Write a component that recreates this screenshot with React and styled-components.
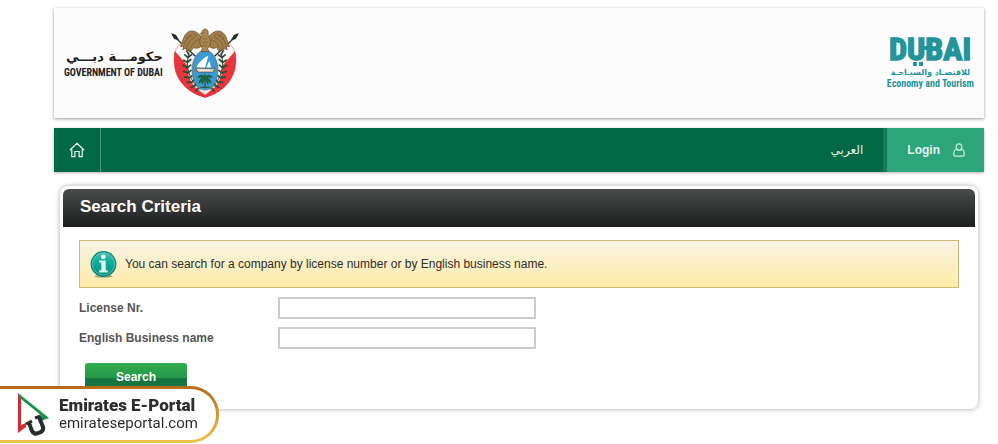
import React, { useState } from 'react'
import styled, { createGlobalStyle } from 'styled-components'

const GlobalStyle = createGlobalStyle`
  * {
    box-sizing: border-box;
  }

  body {
    margin: 0;
    background: #fff;
    font-family: 'Liberation Sans', Arial, sans-serif;
    font-size: 12px;
    color: #333;
  }
`

const narrow = "'Liberation Sans Narrow', 'Roboto Condensed', 'Liberation Sans', sans-serif"

const Page = styled.div`
  padding: 8px 14px 32px 54px;
`

const Header = styled.header`
  display: flex;
  justify-content: space-between;
  align-items: center;
  height: 110px;
  padding: 0 10px;
  margin-bottom: 10px;
  background: #fbfbfb;
  box-shadow: 0 1px 3px rgba(0, 0, 0, 0.4);
`

const GovLogo = styled.div`
  display: flex;
  align-items: center;
  gap: 8px;
`

const GovText = styled.div`
  display: flex;
  flex-direction: column;
  align-items: flex-end;
  color: #1d1d24;
  white-space: nowrap;
`

const GovArabic = styled.span`
  font: bold 13px/20px 'DejaVu Sans', sans-serif;
`

const GovEnglish = styled.span`
  font: bold 10px/12px ${narrow};
`

const DetLogo = styled.div`
  display: flex;
  flex-direction: column;
  align-items: center;
  padding-bottom: 6px;
  color: #24949a;
  white-space: nowrap;
`

const DetArabic = styled.span`
  font: bold 8px/10px 'DejaVu Sans', sans-serif;
`

const DetEnglish = styled.span`
  font: bold 10px/12px ${narrow};
`

const Nav = styled.nav`
  display: flex;
  height: 44px;
  margin-bottom: 14px;
  background: #006845;
  box-shadow: 0 1px 3px rgba(0, 0, 0, 0.3);
`

const NavLink = styled.a`
  display: flex;
  align-items: center;
  color: #e3f2ec;
  text-decoration: none;
`

const HomeLink = styled(NavLink)`
  justify-content: center;
  width: 47px;
  border-right: 1px solid #4d957d;
`

const LanguageLink = styled(NavLink)`
  margin-left: auto;
  padding: 0 20px;
  font: 12px/20px 'DejaVu Sans', sans-serif;
`

const LoginLink = styled(NavLink)`
  gap: 13px;
  padding: 0 19px 0 20px;
  border-left: 4px solid #10805a;
  background: #2ca57b;
  font-size: 12px;
  font-weight: bold;
`

const Panel = styled.section`
  margin: 0 6px;
  padding: 3px;
  border-radius: 8px;
  background: #fff;
  box-shadow: 0 0 5px rgba(0, 0, 0, 0.35);
`

const PanelTitle = styled.h1`
  margin: 0;
  padding: 0 17px 2px;
  border-radius: 6px 6px 0 0;
  background: linear-gradient(#4a4c4b, #1c1e1d);
  color: #fff;
  font-size: 17px;
  line-height: 36px;
`

const PanelBody = styled.div`
  padding: 13px 16px;
`

const Notice = styled.div`
  display: flex;
  align-items: center;
  gap: 8px;
  height: 48px;
  padding: 0 10px;
  margin-bottom: 9px;
  border: 1px solid #cdba78;
  background: linear-gradient(#f7f3e4, #ffeba6);
  color: #2d2d2d;
`

const Field = styled.div`
  display: flex;
  align-items: center;
  margin-bottom: 8px;
`

const Label = styled.label`
  width: 199px;
  color: #555;
  font-weight: bold;
`

const Input = styled.input.attrs({ type: 'text' })`
  width: 258px;
  height: 22px;
  padding: 0 4px;
  border: 2px solid #ccc;
  background: #fff;
  font: inherit;
`

const SearchButton = styled.button.attrs({ type: 'submit' })`
  width: 102px;
  height: 30px;
  margin: 6px 0 0 6px;
  padding: 0 0 2px;
  border: 0;
  border-radius: 3px;
  background: linear-gradient(#30ad4c, #26964a 50%, #157440 51%, #157440);
  color: #fff;
  font: bold 12px/16px 'Liberation Sans', Arial, sans-serif;
`

const PortalBadge = styled.a`
  position: fixed;
  left: 0;
  bottom: 1px;
  display: flex;
  align-items: center;
  gap: 9px;
  height: 57px;
  padding: 0 18px 0 17px;
  border: solid transparent;
  border-width: 3px 3px 3px 0;
  border-radius: 0 28px 28px 0;
  background: linear-gradient(#fff, #fff) padding-box,
    linear-gradient(#b26b1b, #f0c44c) border-box;
  color: #2d2d2d;
  text-decoration: none;
  white-space: nowrap;
`

const BadgeText = styled.span`
  display: flex;
  flex-direction: column;
  padding-bottom: 2px;
`

const BadgeTitle = styled.strong`
  font: 900 17px/19px Roboto, sans-serif;
`

const BadgeUrl = styled.span`
  font: 15px/17px Roboto, sans-serif;
`

const Spear = ({ flip }) => (
  <g transform={flip ? 'translate(234 0) scale(-1 1)' : undefined}>
    <path d="M18 43 L88 108" stroke="#26282e" strokeWidth="4" />
    <path d="M15 38 l15 6 9 16 -15 -4z" fill="#26282e" />
  </g>
)

const Wing = ({ flip }) => (
  <g transform={flip ? 'translate(234 0) scale(-1 1)' : undefined}>
    <path
      d="M107 52 C98 35 78 28 68 34 C52 42 52 60 43 79 L53 78 50 89 60 83 61 94 70 84 74 94 82 82 C94 88 108 80 111 68z"
      fill="#a37f48"
      stroke="#5a472b"
      strokeWidth="2"
    />
    <path
      d="M55 75 C57 60 65 48 79 44 M63 82 C66 66 75 55 89 51 M74 83 C79 69 88 61 99 58 M59 51 l8 5 M67 42 l9 8 M82 38 l7 10"
      fill="none"
      stroke="#6a5230"
      strokeWidth="2"
    />
  </g>
)

const Wreath = ({ flip }) => (
  <g transform={flip ? 'translate(234 0) scale(-1 1)' : undefined} stroke="#264b35">
    <path d="M69 98 C58 132 64 176 103 209" fill="none" strokeWidth="3" />
    <path
      d="M68 103l-5-10M66 112l-10-8M65 112l11-8M63 126l-10-6M63 127l11-9M62 141l-11-6M63 143l11-8M63 157l-10-3M65 159l10-8M67 172l-11-1M69 174l9-7M75 186l-11 1M77 187l7-9M85 197l-10 5M86 197l5-9M96 205l-6 8"
      fill="none"
      strokeWidth="5"
      strokeLinecap="round"
    />
  </g>
)

const Emblem = () => (
  <svg width="68" height="70" viewBox="15 23 204 211" aria-hidden="true">
    <path
      d="M42 72 C25 87 22 107 25 135 C29 178 58 212 117 232 C176 212 205 178 209 135 C212 107 209 87 192 72z"
      fill="#fcf8f7"
      stroke="#d9767a"
      strokeWidth="2"
    />
    <path
      d="M26 92 L66 138 C62 165 76 192 95 208 L117 220 139 208 C158 192 172 165 168 138 L208 92 C220 158 188 213 117 233 C46 213 14 158 26 92z"
      fill="#e6353c"
    />
    <path d="M66 113 L86 94 148 94 168 113 C172 165 153 203 117 224 C81 203 62 165 66 113z" fill="#f8efea" />
    <Spear />
    <Spear flip />
    <Wreath />
    <Wreath flip />
    <ellipse cx="117" cy="150" rx="39" ry="60" fill="#3b9bd2" stroke="#3f6d86" strokeWidth="2" />
    <path d="M80 152 H154" stroke="#7c7e65" strokeWidth="3" />
    <path d="M91 141 C103 122 114 112 127 107 L117 143z M121 142 L130 122 135 142z" fill="#fff" />
    <path d="M89 144 L139 146 147 143 141 156 H96z" fill="#f0e1cc" stroke="#404447" strokeWidth="2" />
    <path d="M117 173 V202" stroke="#4c4d2d" strokeWidth="4" />
    <path
      d="M117 173 Q107 160 95 172 Q108 167 117 174 Q102 173 100 187 Q111 178 117 175 Q110 181 108 192 M117 173 Q127 160 139 172 Q126 167 117 174 Q132 173 134 187 Q123 178 117 175 Q124 181 126 192 M117 173 L116 161"
      fill="none"
      stroke="#176344"
      strokeWidth="4"
    />
    <path d="M103 202 H131" stroke="#315841" strokeWidth="4" />
    <Wing />
    <Wing flip />
    <path
      d="M107 45 L103 39 108 37 C108 25 122 21 126 33 L127 47 C139 61 132 78 125 85 L129 94 H105 L109 85 C101 76 98 60 107 45z"
      fill="#ab8750"
      stroke="#5a472b"
      strokeWidth="2"
    />
    <path d="M109 54l5 4 5-4 5 4M107 64l5 4 6-4 7 4M108 75l6 3 5-3 6 3M109 37h5" fill="none" stroke="#6a5230" strokeWidth="2" />
  </svg>
)

const DubaiMark = () => (
  <svg width="84" height="38" viewBox="0 0 84 38" role="img" aria-label="DUBAI">
    <text
      x="42"
      y="30"
      textAnchor="middle"
      fill="#24949a"
      stroke="#24949a"
      strokeWidth="1.5"
      fontFamily={narrow}
      fontWeight="bold"
      fontSize="32"
    >
      DUBAI
    </text>
    <path d="M25 32h4v4h-4zM31 32h4v4h-4zM36 16h7v4h-7z" fill="#24949a" />
  </svg>
)

const HomeIcon = () => (
  <svg width="16" height="16" viewBox="0 0 16 16" fill="none" stroke="#e9f7f1" strokeWidth="1.2" aria-hidden="true">
    <path d="M.8 8.2 8 1.3 15.2 8.2M2.8 7.2v7.4h3.1V9.5h4.2v5.1h3.1V7.2" />
  </svg>
)

const UserIcon = () => (
  <svg width="12" height="14" viewBox="0 0 12 14" fill="none" stroke="#d0eee2" strokeWidth="1.2" aria-hidden="true">
    <path d="M6 .8C2 .8 2.5 7.4 6 7.4S10 .8 6 .8zM3.4 6.2C1.4 6.8.7 8.6.7 11.2c0 1.4.6 1.9 1.6 1.9h7.4c1 0 1.6-.5 1.6-1.9 0-2.6-.7-4.4-2.7-5" />
  </svg>
)

const InfoIcon = () => (
  <svg width="27" height="27" viewBox="0 0 27 27" aria-hidden="true">
    <defs>
      <linearGradient id="info" x2="0" y2="1">
        <stop stopColor="#39c5ae" />
        <stop offset=".5" stopColor="#08a89a" />
        <stop offset="1" stopColor="#078879" />
      </linearGradient>
    </defs>
    <ellipse cx="13.5" cy="25.3" rx="9" ry="1.4" fill="#a59c70" />
    <circle cx="13.5" cy="13" r="12.3" fill="url(#info)" stroke="#137f73" strokeWidth="1.2" />
    <circle cx="13.5" cy="13" r="11" fill="none" stroke="#67d2c1" strokeWidth=".7" />
    <circle cx="13.3" cy="5.8" r="2.4" fill="#effcf5" />
    <path d="M9.3 9.6h6.4v9.6h2v2.2H9.2v-2.2h2.2v-7.4H9.3z" fill="#e1f8ee" />
  </svg>
)

const PointerIcon = () => (
  <svg width="33" height="46" viewBox="0 0 33 46" fill="none" aria-hidden="true">
    <path d="M1 1 L4 5 V33 L9 31 V35 L1 41z" fill="#d52b33" />
    <path d="M1 1 L32 26 24 29 22 26 25 24 4 7z" fill="#149649" />
    <path d="M12 31 L15 39 Q17 43 21 41 L24 40 Q27 38 26 35 L22 25" stroke="#292d2f" strokeWidth="4" />
    <path d="M9 32 L15 29 M18 26 L24 24" stroke="#292d2f" strokeWidth="3" />
  </svg>
)

const App = () => {
  const [license, setLicense] = useState('')
  const [name, setName] = useState('')

  return (
    <>
      <GlobalStyle />
      <Page>
        <Header>
          <GovLogo>
            <GovText>
              <GovArabic lang="ar" dir="rtl">
                حكومـــة دبـــي
              </GovArabic>
              <GovEnglish>GOVERNMENT OF DUBAI</GovEnglish>
            </GovText>
            <Emblem />
          </GovLogo>
          <DetLogo>
            <DubaiMark />
            <DetArabic lang="ar" dir="rtl">
              للاقتصـاد والسيـاحـة
            </DetArabic>
            <DetEnglish>Economy and Tourism</DetEnglish>
          </DetLogo>
        </Header>

        <Nav>
          <HomeLink href="#" aria-label="Home">
            <HomeIcon />
          </HomeLink>
          <LanguageLink href="#ar" lang="ar" dir="rtl">
            العربي
          </LanguageLink>
          <LoginLink href="#login">
            Login
            <UserIcon />
          </LoginLink>
        </Nav>

        <Panel>
          <PanelTitle>Search Criteria</PanelTitle>
          <PanelBody>
            <Notice>
              <InfoIcon />
              You can search for a company by license number or by English business name.
            </Notice>
            <form onSubmit={(e) => e.preventDefault()}>
              <Field>
                <Label htmlFor="license">License Nr.</Label>
                <Input id="license" value={license} onChange={(e) => setLicense(e.target.value)} />
              </Field>
              <Field>
                <Label htmlFor="name">English Business name</Label>
                <Input id="name" value={name} onChange={(e) => setName(e.target.value)} />
              </Field>
              <SearchButton>Search</SearchButton>
            </form>
          </PanelBody>
        </Panel>
      </Page>

      <PortalBadge href="#portal">
        <PointerIcon />
        <BadgeText>
          <BadgeTitle>Emirates E-Portal</BadgeTitle>
          <BadgeUrl>emirateseportal.com</BadgeUrl>
        </BadgeText>
      </PortalBadge>
    </>
  )
}

export default App
